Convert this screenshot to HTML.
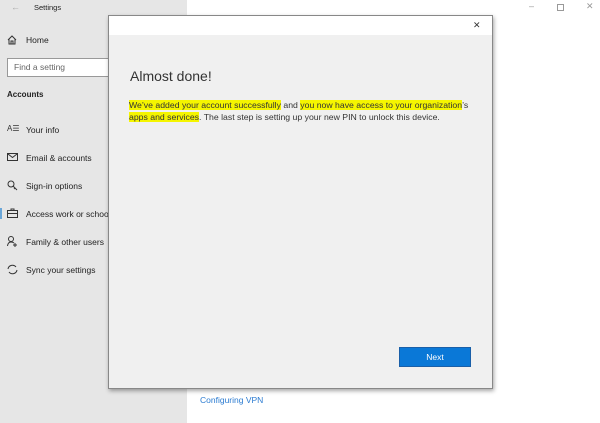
<!DOCTYPE html>
<html><head><style>
body{margin:0;width:600px;height:423px;position:relative;overflow:hidden;background:#fff;font-family:"Liberation Sans",sans-serif;}
.side{position:absolute;left:0;top:0;width:187px;height:423px;background:#e6e6e6;}
.t{position:absolute;font-size:8.5px;color:#222;white-space:nowrap}
.ic{position:absolute;left:7px;font-size:9px;color:#333}
.dlg{position:absolute;left:108px;top:15px;width:383px;height:372px;background:#f0f0f0;border:1px solid #888;box-shadow:1px 2px 4px rgba(0,0,0,.35);}
.bar{position:absolute;left:0;top:0;right:0;height:19px;background:#fff}
.hl{background:#f5f500}
</style></head><body>
<div class="side">
<div class="t" style="left:11px;top:2px;color:#aaa;font-size:9px">←</div>
<div class="t" style="left:34px;top:3px;font-size:7.5px">Settings</div>
<svg style="position:absolute;left:7px;top:35px" width="10" height="10"><path d="M1 5 L5 1 L9 5 M2 4 V9 H8 V4 M4 9 V6 H6 V9" fill="none" stroke="#333" stroke-width="1"/></svg>
<div class="t" style="left:26px;top:35px">Home</div>
<div style="position:absolute;left:7px;top:58px;width:110px;height:17px;border:1px solid #999;background:#fff"></div>
<div class="t" style="left:14px;top:62px;color:#666">Find a setting</div>
<div class="t" style="left:7px;top:90px;font-weight:bold;font-size:8px">Accounts</div>
<div class="ic" style="top:124px;font-size:8px">A☰</div><div class="t" style="left:26px;top:125px">Your info</div>
<svg style="position:absolute;left:7px;top:153px" width="11" height="9"><rect x="0.5" y="0.5" width="10" height="7" fill="none" stroke="#333"/><path d="M1 1 L5.5 4.5 L10 1" fill="none" stroke="#333"/></svg>
<div class="t" style="left:26px;top:153px">Email &amp; accounts</div>
<svg style="position:absolute;left:7px;top:180px" width="11" height="11"><circle cx="4" cy="4" r="3" fill="none" stroke="#333"/><path d="M6 6 L10 10 M8 8 L7 9" stroke="#333" fill="none"/></svg>
<div class="t" style="left:26px;top:181px">Sign-in options</div>
<div style="position:absolute;left:0;top:208px;width:2px;height:11px;background:#6aa6d8"></div>
<svg style="position:absolute;left:7px;top:208px" width="11" height="10"><rect x="0.5" y="2.5" width="10" height="7" fill="none" stroke="#333"/><path d="M4 2.5 V1 H7 V2.5 M0.5 5.5 H10.5" stroke="#333" fill="none"/></svg>
<div class="t" style="left:26px;top:209px">Access work or school</div>
<svg style="position:absolute;left:7px;top:236px" width="11" height="11"><circle cx="4" cy="3" r="2.5" fill="none" stroke="#333"/><path d="M0.5 10 Q1 6 4 6 Q6 6 7 7 M8 7 V11 M6 9 H10" stroke="#333" fill="none"/></svg>
<div class="t" style="left:26px;top:237px">Family &amp; other users</div>
<svg style="position:absolute;left:7px;top:264px" width="11" height="11"><path d="M1 5 A4.5 4.5 0 0 1 9 3 M10 6 A4.5 4.5 0 0 1 2 8" stroke="#333" fill="none"/></svg>
<div class="t" style="left:26px;top:265px">Sync your settings</div>
</div>
<div class="t" style="left:529px;top:1px;color:#999;font-size:9px">–</div>
<div style="position:absolute;left:557px;top:4px;width:5px;height:5px;border:1px solid #999"></div>
<div class="t" style="left:586px;top:1px;color:#999;font-size:9px">✕</div>
<div class="t" style="left:200px;top:395px;color:#2b7bd1;font-size:8.5px">Configuring VPN</div>
<div class="dlg">
<div class="bar"></div>
<div class="t" style="left:364px;top:4px;font-size:9px;color:#333">✕</div>
<div class="t" style="left:21px;top:52px;font-size:14px;color:#333">Almost done!</div>
<div class="t" style="left:20px;top:83px;font-size:8.7px;line-height:12px;color:#333"><span class="hl">We’ve added your account successfully</span> and <span class="hl">you now have access to your organization</span>’s<br><span class="hl">apps and services</span>. The last step is setting up your new PIN to unlock this device.</div>
<div style="position:absolute;left:290px;top:331px;width:70px;height:18px;background:#0a78d7;border:1px solid #1a5fa8;color:#fff;font-size:8.5px;text-align:center;line-height:18px">Next</div>
</div>
</body></html>
